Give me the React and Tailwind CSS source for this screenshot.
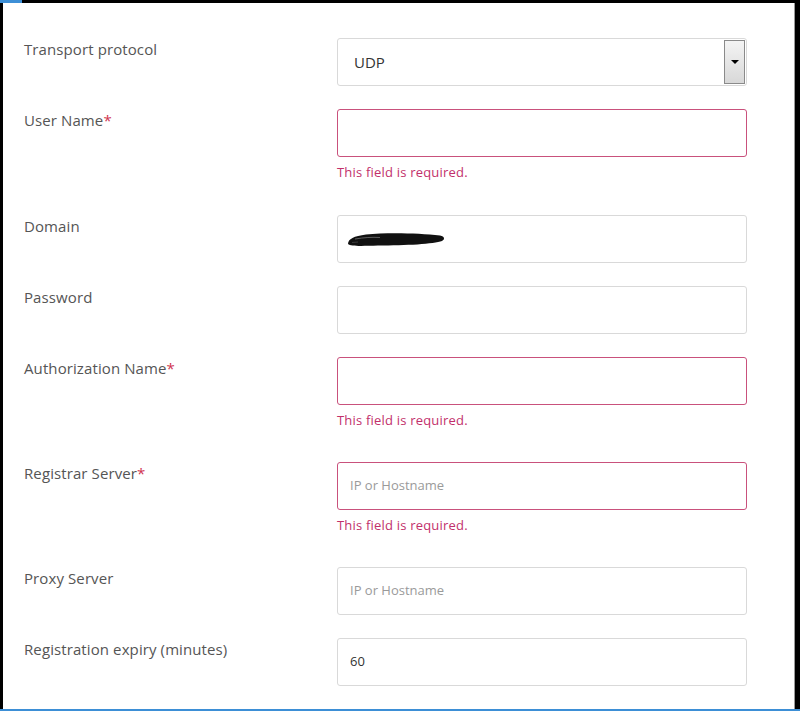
import React from 'react'

const rows = [
  { label: 'Transport protocol', type: 'select', value: 'UDP' },
  { label: 'User Name', required: true, invalid: true },
  { label: 'Domain', redacted: true },
  { label: 'Password' },
  { label: 'Authorization Name', required: true, invalid: true },
  { label: 'Registrar Server', required: true, invalid: true, placeholder: 'IP or Hostname' },
  { label: 'Proxy Server', placeholder: 'IP or Hostname' },
  { label: 'Registration expiry (minutes)', value: '60' },
]

// Black marker scribble hiding the domain value
function Redaction() {
  return (
    <svg width="100" height="18" viewBox="0 0 100 18" className="absolute left-[8px] top-[14px]">
      <path
        d="M2 14 C2 9 8 6 20 4.5 C40 2.5 72 3 94 5.5 C99 6.5 99 9.5 96 11 C88 14 60 15.5 32 15.5 C16 16 5 16.5 2 14 Z"
        fill="#111"
      />
      <path d="M9 9 C18 7.5 26 7 34 7.5" stroke="#666" strokeWidth="0.9" fill="none" />
      <path d="M6 12.5 L12 12" stroke="#444" strokeWidth="0.8" fill="none" />
    </svg>
  )
}

function Field({ row }) {
  const border = row.invalid ? 'border-[#c9517c]' : 'border-[#d9d9d9]'

  if (row.type === 'select') {
    return (
      <div className={`relative flex h-[48px] w-[410px] items-center rounded-[3px] border ${border} bg-white`}>
        <span className="pl-[16px] text-[15px] text-[#333]">{row.value}</span>
        <div className="absolute right-[1px] top-[1px] flex h-[44px] w-[21px] items-center justify-center border border-[#8a8a8a] bg-gradient-to-b from-[#f4f4f4] to-[#d8d8d8]">
          <span className="h-0 w-0 border-x-[4px] border-t-[4px] border-x-transparent border-t-black" />
        </div>
      </div>
    )
  }

  return (
    <div className={`relative flex h-[48px] w-[410px] items-center rounded-[3px] border ${border} bg-white`}>
      {row.redacted && <Redaction />}
      {row.value && <span className="pl-[12px] text-[13px] text-[#333]">{row.value}</span>}
      {row.placeholder && <span className="pl-[12px] text-[13px] text-[#9a9a9a]">{row.placeholder}</span>}
    </div>
  )
}

export default function App() {
  return (
    <div className="flex h-[711px] w-[800px] flex-col bg-black font-['Open_Sans','Liberation_Sans',sans-serif]">
      {/* top strip */}
      <div className="flex h-[3px] shrink-0">
        <div className="w-[22px] bg-[#3d8fd6]" />
        <div className="flex-1 bg-black" />
      </div>

      <div className="flex min-h-0 flex-1">
        <div className="w-[3px] bg-black" />
        <div className="flex flex-1 flex-col gap-[23px] bg-white pl-[21px] pt-[35px]">
          {rows.map((row, i) => (
            <div key={row.label} className={`flex ${i === 1 ? 'pb-[12px]' : row.invalid ? 'pb-[11px]' : ''}`}>
              <div className="w-[313px] pt-[1px] text-[15px] leading-5 tracking-[0.1px] text-[#555]">
                {row.label}
                {row.required && <span className="text-[#d0334f]">*</span>}
              </div>
              <div>
                <Field row={row} />
                {row.invalid && (
                  <p className="mt-[7px] text-[13px] leading-4 tracking-[0.2px] text-[#c2306b]">This field is required.</p>
                )}
              </div>
            </div>
          ))}
        </div>
        <div className="w-[1px] bg-[#9a9a9a]" />
        <div className="w-[5px] bg-black" />
      </div>

      {/* bottom strip */}
      <div className="h-[2px] shrink-0 bg-[#3d8fd6]" />
    </div>
  )
}
